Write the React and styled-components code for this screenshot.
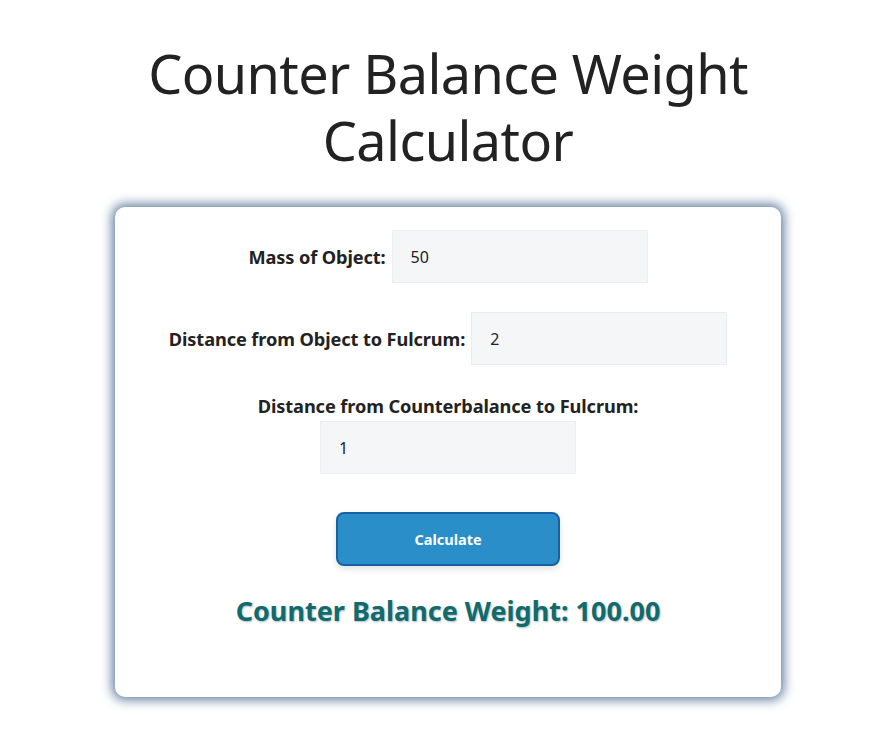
import React, { useState } from 'react'
import styled, { createGlobalStyle } from 'styled-components'

const GlobalStyle = createGlobalStyle`
  body {
    margin: 0;
    padding: 0 0 40px 9px;
    background: #ffffff;
    font-family: "Noto Sans", "Open Sans", sans-serif;
    color: #222222;
  }
`

const Page = styled.div`
  display: flex;
  flex-direction: column;
  align-items: center;
`

const Title = styled.h1`
  margin: 40px 0 33px;
  font-size: 54px;
  font-weight: 400;
  line-height: 67px;
  text-align: center;
  color: #222222;
  letter-spacing: -0.6px;
`

const Card = styled.div`
  width: 666px;
  box-sizing: border-box;
  padding: 23px 20px 68px;
  background: #ffffff;
  border-radius: 10px;
  box-shadow: 0 0 11px 3px rgba(70, 105, 145, 0.85);
  display: flex;
  flex-direction: column;
  align-items: center;
`

const Field = styled.div`
  display: flex;
  flex-wrap: wrap;
  justify-content: center;
  align-items: center;
  column-gap: 6px;
  row-gap: 3px;
  margin-bottom: ${p => p.$last ? '38px' : '29px'};
  max-width: 600px;
`

const Label = styled.label`
  font-size: 18.2px;
  font-weight: 700;
  color: #222222;
  letter-spacing: -0.1px;
`

const Input = styled.input`
  width: 256px;
  height: 53px;
  box-sizing: border-box;
  padding: 0 18px;
  background: #f5f6f8;
  border: 1px solid #ebecef;
  font-family: inherit;
  font-size: 16px;
  color: #222222;
  outline: none;
`

const Button = styled.button`
  width: 224px;
  height: 54px;
  background: #2a8fc9;
  border: 2px solid #1660a6;
  border-radius: 8px;
  color: #ffffff;
  font-family: inherit;
  font-size: 14.5px;
  font-weight: 700;
  cursor: pointer;
  box-shadow: 0 3px 6px rgba(0, 0, 0, 0.12);
`

const Result = styled.h2`
  margin: 26px 0 0;
  font-size: 27px;
  font-weight: 700;
  color: #136a6a;
  text-shadow: 1px 1px 2px rgba(60, 110, 130, 0.45);
`

const fields = [
  { key: 'mass', label: 'Mass of Object:' },
  { key: 'objDist', label: 'Distance from Object to Fulcrum:' },
  { key: 'cbDist', label: 'Distance from Counterbalance to Fulcrum:' },
]

export default function App() {
  const [values, setValues] = useState({ mass: '50', objDist: '2', cbDist: '1' })
  const [weight, setWeight] = useState(100)

  const calculate = () => {
    const m = parseFloat(values.mass)
    const d1 = parseFloat(values.objDist)
    const d2 = parseFloat(values.cbDist)
    if (d2) setWeight((m * d1) / d2)
  }

  return (
    <Page>
      <GlobalStyle />
      <Title>Counter Balance Weight<br />Calculator</Title>
      <Card>
        {fields.map((f, i) => (
          <Field key={f.key} $last={i === fields.length - 1}>
            <Label htmlFor={f.key}>{f.label}</Label>
            <Input
              id={f.key}
              type="text"
              value={values[f.key]}
              onChange={e => setValues({ ...values, [f.key]: e.target.value })}
            />
          </Field>
        ))}
        <Button onClick={calculate}>Calculate</Button>
        <Result>Counter Balance Weight: {weight.toFixed(2)}</Result>
      </Card>
    </Page>
  )
}
